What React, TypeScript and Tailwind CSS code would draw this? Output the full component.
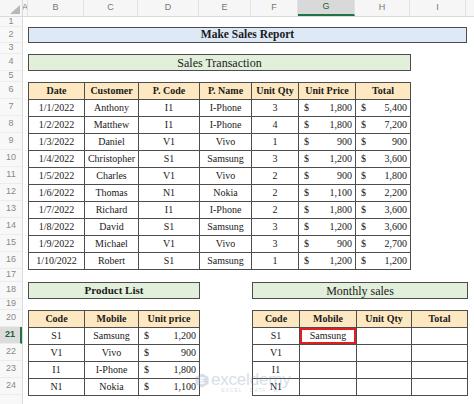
import React from "react";

const serif = { fontFamily: '"Liberation Serif", "Times New Roman", serif' };
const sans = { fontFamily: '"Liberation Sans", Arial, sans-serif' };

const colHeads = [
  { l: "A", w: "w-[5px]" },
  { l: "B", w: "w-[56px]" },
  { l: "C", w: "w-[54px]" },
  { l: "D", w: "w-[61px]" },
  { l: "E", w: "w-[52px]" },
  { l: "F", w: "w-[47px]" },
  { l: "G", w: "w-[57px]" },
  { l: "H", w: "w-[55px]" },
  { l: "I", w: "w-[56px]" },
];

// row number -> height class
const rowHeights: [number, string][] = [
  [1, "h-[10px]"],
  [2, "h-[16px]"],
  [3, "h-[11px]"],
  [4, "h-[17px]"],
  [5, "h-[11px]"],
  [6, "h-[17px]"],
  [7, "h-[17px]"],
  [8, "h-[17px]"],
  [9, "h-[17px]"],
  [10, "h-[17px]"],
  [11, "h-[17px]"],
  [12, "h-[17px]"],
  [13, "h-[17px]"],
  [14, "h-[17px]"],
  [15, "h-[17px]"],
  [16, "h-[17px]"],
  [17, "h-[13px]"],
  [18, "h-[17px]"],
  [19, "h-[11px]"],
  [20, "h-[17px]"],
  [21, "h-[17px]"],
  [22, "h-[17px]"],
  [23, "h-[17px]"],
  [24, "h-[17px]"],
];

const sales = [
  ["1/1/2022", "Anthony", "I1", "I-Phone", "3", "1,800", "5,400"],
  ["1/2/2022", "Matthew", "I1", "I-Phone", "4", "1,800", "7,200"],
  ["1/3/2022", "Daniel", "V1", "Vivo", "1", "900", "900"],
  ["1/4/2022", "Christopher", "S1", "Samsung", "3", "1,200", "3,600"],
  ["1/5/2022", "Charles", "V1", "Vivo", "2", "900", "1,800"],
  ["1/6/2022", "Thomas", "N1", "Nokia", "2", "1,100", "2,200"],
  ["1/7/2022", "Richard", "I1", "I-Phone", "2", "1,800", "3,600"],
  ["1/8/2022", "David", "S1", "Samsung", "3", "1,200", "3,600"],
  ["1/9/2022", "Michael", "V1", "Vivo", "3", "900", "2,700"],
  ["1/10/2022", "Robert", "S1", "Samsung", "1", "1,200", "1,200"],
];

const products = [
  ["S1", "Samsung", "1,200"],
  ["V1", "Vivo", "900"],
  ["I1", "I-Phone", "1,800"],
  ["N1", "Nokia", "1,100"],
];

const cell = "h-[17px] border-r border-b border-[#4d4d4d] flex items-center justify-center";
const head = cell + " bg-[#fde8c2] font-bold";

function Money({ v }: { v: string }) {
  return (
    <div className={cell + " !justify-between pl-[5px] pr-[3px]"}>
      <span>$</span>
      <span>{v}</span>
    </div>
  );
}

function SelectAll() {
  return (
    <svg width="10" height="9" viewBox="0 0 10 9" className="absolute right-[2px] bottom-[2px]">
      <polygon points="10,0 10,9 0,9" fill="#b8b8b8" />
    </svg>
  );
}

export default function App() {
  return (
    <div className="relative w-[474px] h-[404px] overflow-hidden bg-white text-[#1a1a1a]">
      {/* column headers */}
      <div className="flex h-[17px] bg-[#f6f6f6] border-b border-[#dadada] text-[9px] text-[#777]" style={sans}>
        <div className="relative w-[23px] shrink-0 border-r border-[#dadada]">
          <SelectAll />
        </div>
        {colHeads.map((c) => (
          <div
            key={c.l}
            className={`${c.w} shrink-0 flex items-center justify-center border-r border-[#e2e2e2] overflow-hidden ${
              c.l === "G" ? "bg-[#d9d9d9] text-[#1e5e3a] border-b-2 border-b-[#217346]" : ""
            }`}
          >
            {c.l}
          </div>
        ))}
        <div className="flex-1" />
      </div>

      <div className="flex">
        {/* row headers */}
        <div className="w-[23px] h-[387px] shrink-0 flex flex-col bg-[#f8f8f8] border-r border-[#dadada] text-[9px] text-[#888]" style={sans}>
          {rowHeights.map(([n, h]) => (
            <div
              key={n}
              className={`${h} shrink-0 flex items-center justify-center border-b border-[#ececec] ${
                n === 21 ? "bg-[#dcdcdc] text-[#1e5e3a] font-bold border-r-2 border-r-[#217346]" : ""
              }`}
            >
              {n}
            </div>
          ))}
        </div>

        {/* sheet */}
        <div className="flex flex-col pl-[5px] text-[10px] leading-none" style={serif}>
          <div className="h-[10px]" />
          <div className="w-[439px] h-[16px] bg-[#dde9f6] border border-[#4d4d4d] flex items-center justify-center font-bold text-[11.5px]">
            Make Sales Report
          </div>
          <div className="h-[11px]" />
          <div className="w-[383px] h-[17px] bg-[#e2efda] border border-[#4d4d4d] flex items-center justify-center text-[12px]">
            Sales Transaction
          </div>
          <div className="h-[11px]" />

          <div className="grid grid-cols-[56px_54px_61px_52px_47px_57px_55px] w-[383px] border-l border-t border-[#4d4d4d]">
            {["Date", "Customer", "P. Code", "P. Name", "Unit Qty", "Unit Price", "Total"].map((h) => (
              <div key={h} className={head}>
                {h}
              </div>
            ))}
            {sales.map((r) => (
              <React.Fragment key={r[0]}>
                <div className={cell}>{r[0]}</div>
                <div className={cell}>{r[1]}</div>
                <div className={cell}>{r[2]}</div>
                <div className={cell}>{r[3]}</div>
                <div className={cell}>{r[4]}</div>
                <Money v={r[5]} />
                <Money v={r[6]} />
              </React.Fragment>
            ))}
          </div>

          <div className="h-[12px]" />

          <div className="flex gap-[52px]">
            <div className="flex flex-col">
              <div className="w-[172px] h-[17px] bg-[#e2efda] border border-[#4d4d4d] flex items-center justify-center font-bold text-[11px]">
                Product List
              </div>
              <div className="h-[11px]" />
              <div className="grid grid-cols-[56px_54px_61px] w-[172px] border-l border-t border-[#4d4d4d]">
                {["Code", "Mobile", "Unit price"].map((h) => (
                  <div key={h} className={head}>
                    {h}
                  </div>
                ))}
                {products.map((p) => (
                  <React.Fragment key={p[0]}>
                    <div className={cell}>{p[0]}</div>
                    <div className={cell}>{p[1]}</div>
                    <Money v={p[2]} />
                  </React.Fragment>
                ))}
              </div>
            </div>

            <div className="flex flex-col">
              <div className="w-[216px] h-[17px] bg-[#e2efda] border border-[#4d4d4d] flex items-center justify-center text-[12px]">
                Monthly sales
              </div>
              <div className="h-[11px]" />
              <div className="grid grid-cols-[47px_57px_55px_56px] w-[216px] border-l border-t border-[#4d4d4d]">
                {["Code", "Mobile", "Unit Qty", "Total"].map((h) => (
                  <div key={h} className={head}>
                    {h}
                  </div>
                ))}
                {products.map((p) => (
                  <React.Fragment key={p[0]}>
                    <div className={cell}>{p[0]}</div>
                    <div className={cell + (p[0] === "S1" ? " shadow-[inset_0_0_0_2px_#e21d1d]" : "")}>
                      {p[0] === "S1" ? "Samsung" : ""}
                    </div>
                    <div className={cell} />
                    <div className={cell} />
                  </React.Fragment>
                ))}
              </div>
            </div>
          </div>
        </div>
      </div>

      {/* watermark */}
      <div className="absolute left-[195px] top-[372px] flex items-start gap-[2px] opacity-30 pointer-events-none" style={sans}>
        <svg width="14" height="15" viewBox="0 0 14 15" className="mt-[1px]">
          <path d="M7 0.5 L13.5 4 L13.5 11 L7 14.5 L0.5 11 L0.5 4 Z" fill="#7c93b8" />
          <path d="M4.5 5 L9.5 5 M4.5 7.5 L8.5 7.5 M4.5 10 L9.5 10" stroke="#fff" strokeWidth="1.3" />
        </svg>
        <div className="flex flex-col items-center">
          <span className="text-[17px] leading-[15px] text-[#7c93b8] tracking-[-0.2px]">exceldemy</span>
          <span className="text-[5px] leading-[6px] tracking-[1px] text-[#7c93b8]">EXCEL · DATA · BI</span>
        </div>
      </div>
    </div>
  );
}
